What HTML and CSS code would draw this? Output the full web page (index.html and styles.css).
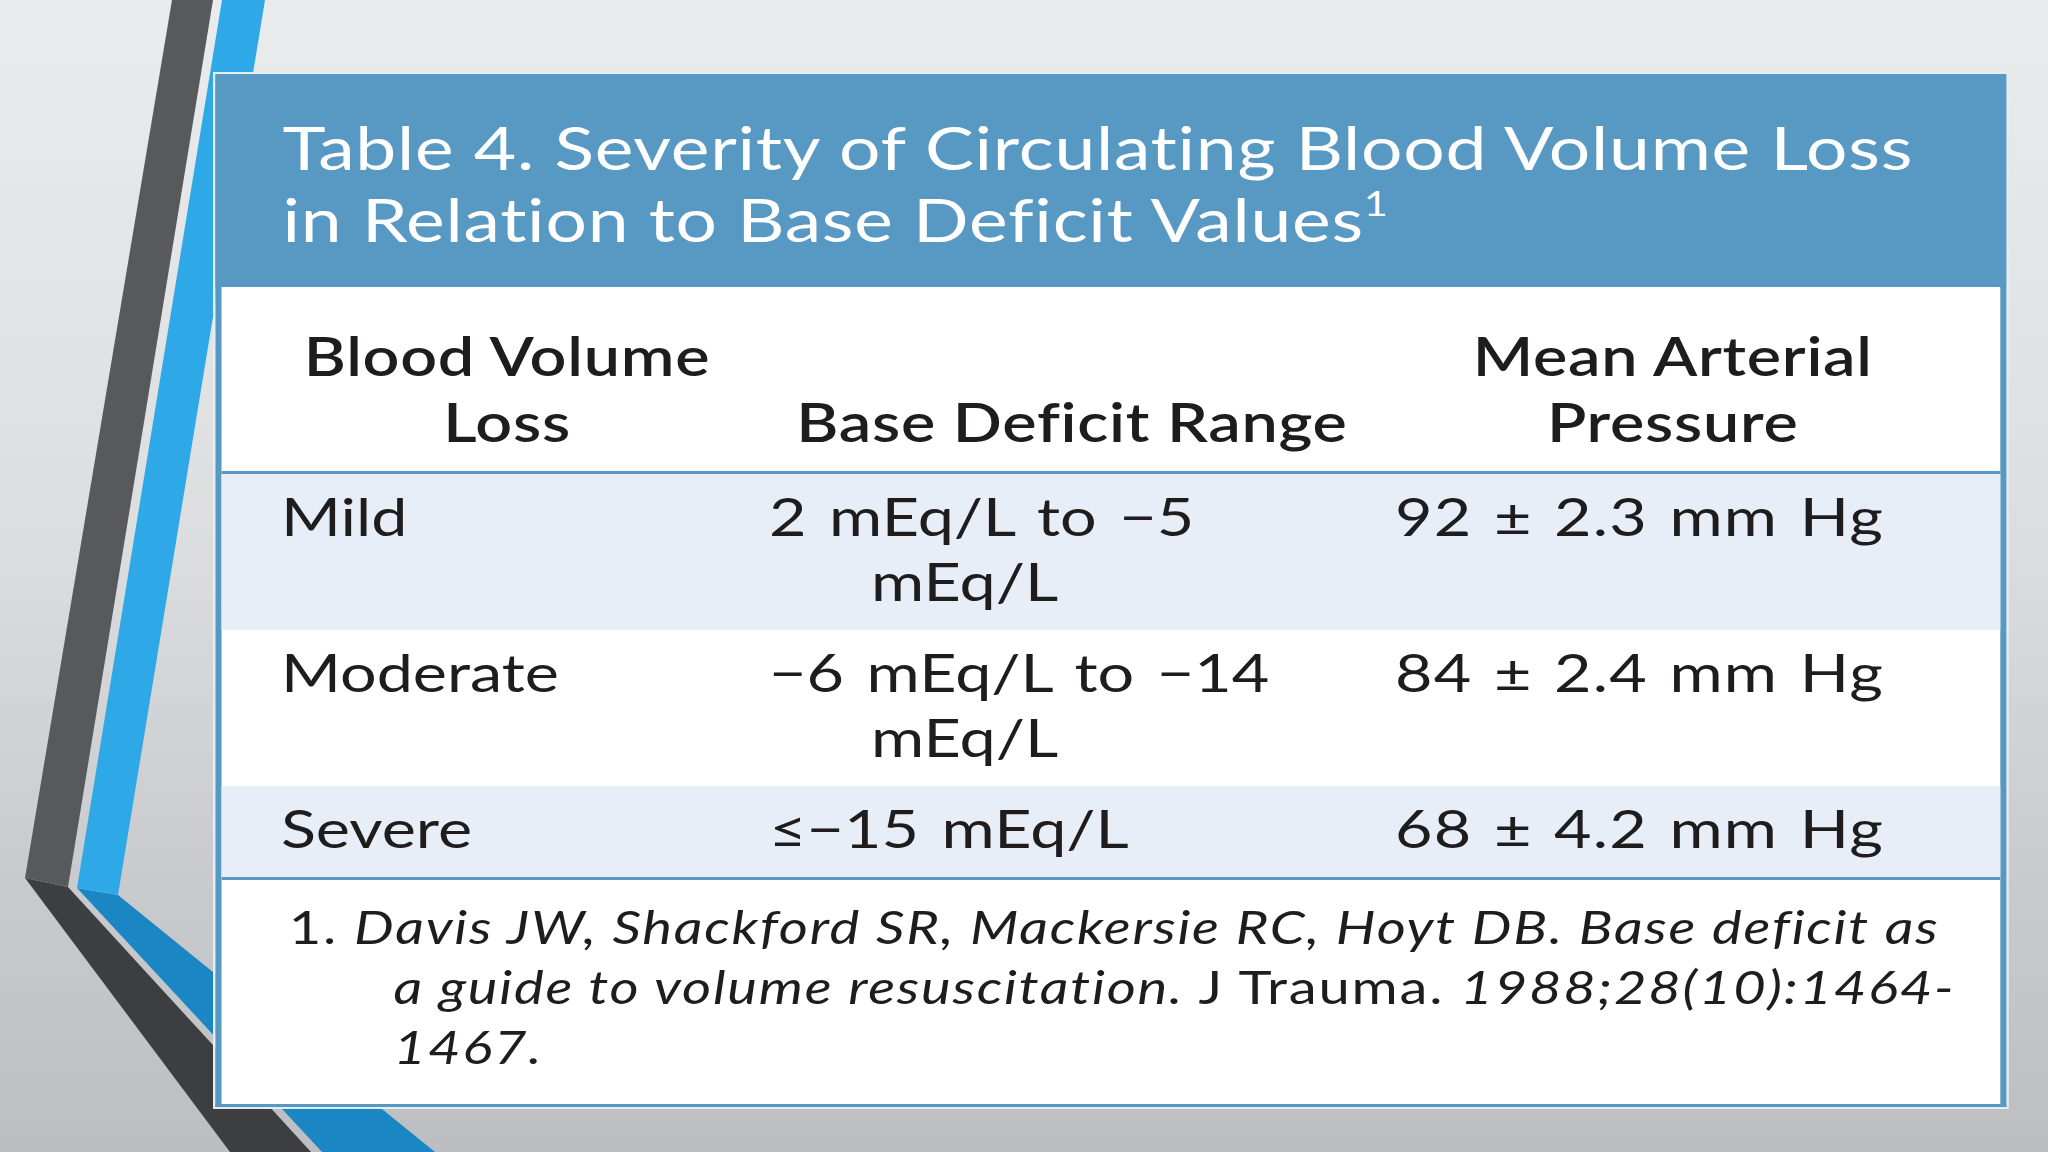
FILE: index.html
```html
<!DOCTYPE html>
<html lang="en">
<head>
<meta charset="utf-8">
<title>Table 4</title>
<link rel="stylesheet" href="styles.css">
</head>
<body>
<svg class="deco" width="2048" height="1152" viewBox="0 0 2048 1152" aria-hidden="true">
  <polygon points="230,1152 311,1152 68,887 25,878" fill="#3d3e40"/>
  <polygon points="172,0 213,0 68,887 25,878" fill="#58595b"/>
  <polygon points="77,888 118,895 435,1152 322,1152" fill="#1b86c4"/>
  <polygon points="222,0 265,0 118,895 77,888" fill="#2ea8e6"/>
</svg>
<main class="slide">
  <section class="panel">
    <header class="title">
      <h1>Table 4. Severity of Circulating Blood Volume Loss<br>in Relation to Base Deficit Values<sup>1</sup></h1>
    </header>
    <div class="tbody">
      <div class="row head">
        <div class="th c1">Blood Volume<br>Loss</div>
        <div class="th c2">Base Deficit Range</div>
        <div class="th c3">Mean Arterial<br>Pressure</div>
      </div>
      <div class="row shade">
        <div class="td c1">Mild</div>
        <div class="td c2 hang">2 mEq/L to −5<br>mEq/L</div>
        <div class="td c3">92 ± 2.3 mm Hg</div>
      </div>
      <div class="row">
        <div class="td c1">Moderate</div>
        <div class="td c2 hang">−6 mEq/L to −14<br>mEq/L</div>
        <div class="td c3">84 ± 2.4 mm Hg</div>
      </div>
      <div class="row shade last">
        <div class="td c1">Severe</div>
        <div class="td c2 hang">≤−15 mEq/L</div>
        <div class="td c3">68 ± 4.2 mm Hg</div>
      </div>
      <p class="note">1. <i>Davis JW, Shackford SR, Mackersie RC, Hoyt DB. Base deficit as<br>a guide to volume resuscitation.</i> J Trauma. <i>1988;28(10):1464-<br>1467.</i></p>
    </div>
  </section>
</main>
</body>
</html>
```
FILE: styles.css
```css
html, body {
  margin: 0;
  padding: 0;
}
body {
  width: 2048px;
  height: 1152px;
  overflow: hidden;
  position: relative;
  background: linear-gradient(180deg, #e9ebec 0%, #dcdee0 45%, #c9cbce 75%, #bcbec1 100%);
  font-family: Lato, "Noto Sans", sans-serif;
  color: #1f1c1d;
}
.deco {
  position: absolute;
  left: 0;
  top: 0;
  display: block;
}
.slide {
  position: relative;
  padding: 72px 0 0 213px;
}
.panel {
  width: 1472px;
  box-sizing: border-box;
  border: 2px solid #e2edf4;
  transform: scaleX(1.22);
  transform-origin: 0 0;
}
.title {
  background: #5899c3;
  padding: 37px 0 32px 55px;
}
.title h1 {
  margin: 0;
  font-size: 60px;
  line-height: 72px;
  font-weight: 400;
  letter-spacing: 0.6px;
  color: #ffffff;
  white-space: nowrap;
}
.title sup {
  font-size: 34px;
  line-height: 0;
  vertical-align: 26px;
}
.tbody {
  background: #ffffff;
  border-left: 5px solid #5899c3;
  border-right: 5px solid #5899c3;
  border-bottom: 3px solid #5899c3;
}
.row {
  display: grid;
  grid-template-columns: 448.7px 513.2px 1fr;
  font-size: 53px;
  line-height: 65px;
  padding: 9px 0 17px;
  white-space: nowrap;
}
.row.head {
  align-items: end;
  line-height: 66px;
  padding: 36px 0 16px;
  border-bottom: 3px solid #5899c3;
}
.row.shade {
  background: #e8eef7;
}
.row.last {
  border-bottom: 3px solid #5899c3;
}
.th {
  font-weight: 600;
  text-align: center;
  letter-spacing: 0.6px;
}
.th.c1 { padding: 0 29.4px 0 48.7px; }
.th.c2 { padding: 0 16.4px 0 0; }
.th.c3 { padding: 0 40.9px 0 0; }
.td.c1 { padding-left: 48.7px; }
.td.c2 { word-spacing: 5px; }
.td.c3 {
  letter-spacing: 1px;
  word-spacing: 3px;
}
.td.hang {
  padding-left: 83.6px;
  text-indent: -83.6px;
}
.note {
  margin: 0;
  font-size: 46px;
  line-height: 60px;
  letter-spacing: 1.45px;
  padding: 17px 0 27px 141px;
  text-indent: -86px;
  white-space: nowrap;
}
.note i {
  font-style: italic;
}
```
